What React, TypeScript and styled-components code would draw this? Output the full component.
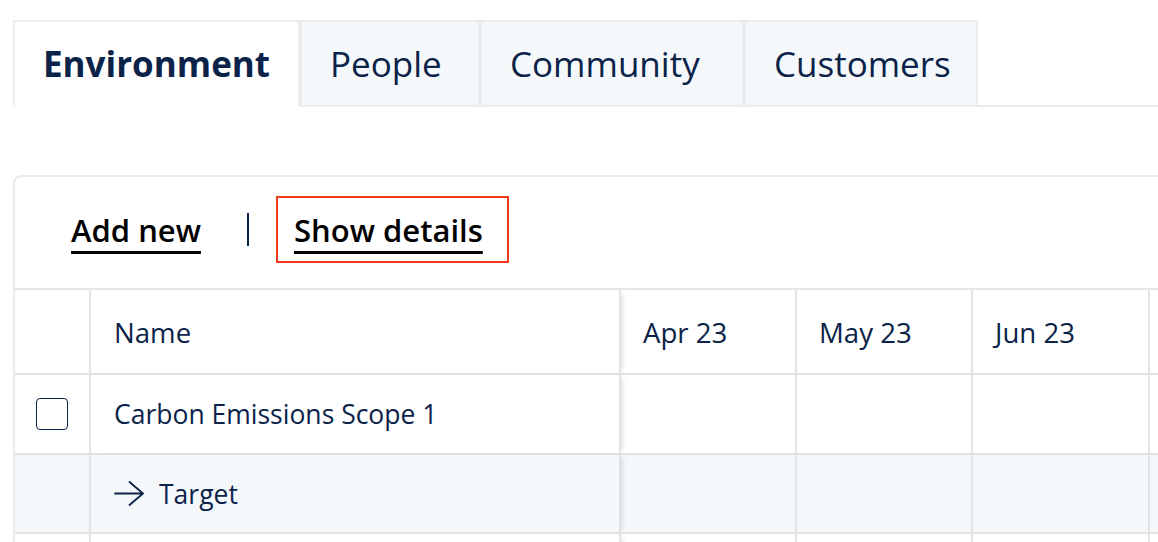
import styled, { createGlobalStyle } from 'styled-components';

const GlobalStyle = createGlobalStyle`
  html, body {
    margin: 0;
    padding: 0;
    background: #ffffff;
    overflow: hidden;
  }
  body {
    font-family: "Open Sans", "Noto Sans", sans-serif;
    color: #0b2349;
  }
  * { box-sizing: border-box; }
`;

const tabs = [
  { label: 'Environment', width: 287 },
  { label: 'People', width: 180 },
  { label: 'Community', width: 264 },
  { label: 'Customers', width: 234 },
];
const months = ['Apr 23', 'May 23', 'Jun 23', ''];

const ArrowIcon = () => (
  <svg width="30" height="25" viewBox="0 0 30 25" fill="none">
    <path d="M1 12.5H29M15.5 1L29 12.5L15.5 24" stroke="#0b2349" strokeWidth="1.8" strokeLinecap="round" strokeLinejoin="round" />
  </svg>
);

export default function App() {
  return (
    <>
      <GlobalStyle />
      <Page>
        <TabBar>
          {tabs.map((t, i) => (
            <Tab key={t.label} $active={i === 0} $width={t.width}>
              {t.label}
            </Tab>
          ))}
          <TabFiller />
        </TabBar>

        <Card>
          <Toolbar>
            <LinkButton>Add new</LinkButton>
            <Divider />
            <LinkButton $highlighted>Show details</LinkButton>
          </Toolbar>

          <Table>
            <Row $header>
              <CheckCell />
              <NameCell>Name</NameCell>
              {months.map((m, i) => (
                <MonthCell key={i}>{m}</MonthCell>
              ))}
            </Row>
            <Row $height={80}>
              <CheckCell>
                <Checkbox />
              </CheckCell>
              <NameCell>Carbon Emissions Scope 1</NameCell>
              {months.map((_, i) => (
                <MonthCell key={i} />
              ))}
            </Row>
            <Row $height={79} $shaded>
              <CheckCell />
              <NameCell>
                <ArrowIcon />
                Target
              </NameCell>
              {months.map((_, i) => (
                <MonthCell key={i} />
              ))}
            </Row>
            <Row $height={80}>
              <CheckCell />
              <NameCell />
              {months.map((_, i) => (
                <MonthCell key={i} />
              ))}
            </Row>
          </Table>
        </Card>
      </Page>
    </>
  );
}

const Page = styled.div`
  padding: 20px 0 0 13px;
  height: 542px;
  overflow: hidden;
`;

const TabBar = styled.div`
  display: flex;
  height: 87px;
`;

const Tab = styled.div<{ $active?: boolean; $width: number }>`
  display: flex;
  align-items: center;
  width: ${(p) => p.$width}px;
  padding: 0 0 0 28px;
  font-size: 35px;
  font-weight: ${(p) => (p.$active ? 700 : 400)};
  color: #0b2349;
  background: ${(p) => (p.$active ? '#ffffff' : '#f5f8fb')};
  border: 2px solid #ececec;
  border-bottom: ${(p) => (p.$active ? '2px solid #ffffff' : '2px solid #ececec')};
  white-space: nowrap;
`;

const TabFiller = styled.div`
  flex: 1;
  border-bottom: 2px solid #ececec;
`;

const Card = styled.div`
  margin-top: 68px;
  margin-right: -80px;
  border: 2px solid #ebebeb;
  border-radius: 8px 8px 0 0;
  background: #ffffff;
`;

const Toolbar = styled.div`
  display: flex;
  align-items: center;
  padding: 19px 0 25px 38px;
  border-bottom: 2px solid #e6e6e6;
`;

const LinkButton = styled.div<{ $highlighted?: boolean }>`
  display: flex;
  align-items: center;
  height: 67px;
  padding: 0 24px 0 16px;
  border: 2px solid ${(p) => (p.$highlighted ? '#f03c1e' : 'transparent')};
  font-size: 31px;
  font-weight: 600;
  color: #000000;
  text-decoration: underline;
  text-decoration-thickness: 3px;
  text-underline-offset: 9px;
`;

const Divider = styled.div`
  width: 2px;
  height: 33px;
  margin: 0 27px 0 20px;
  background: #0b2349;
`;

const Table = styled.div`
  display: flex;
  flex-direction: column;
`;

const Row = styled.div<{ $height?: number; $shaded?: boolean; $header?: boolean }>`
  display: grid;
  grid-template-columns: 76px 530px 176px 176px 177px 176px;
  height: ${(p) => p.$height ?? 85}px;
  background: ${(p) => (p.$shaded ? '#f5f8fb' : '#ffffff')};
  border-bottom: 2px solid #e3e3e3;
  font-size: ${(p) => (p.$header ? 27.6 : 26.5)}px;
`;

const Cell = styled.div`
  display: flex;
  align-items: center;
  border-right: 2px solid #e3e3e3;
  color: #0b2349;
  white-space: nowrap;
`;

const CheckCell = styled(Cell)`
  justify-content: center;
`;

const NameCell = styled(Cell)`
  position: relative;
  z-index: 1;
  gap: 15px;
  padding-left: 23px;
  box-shadow: 4px 0 5px -3px rgba(0, 0, 0, 0.14);
`;

const MonthCell = styled(Cell)`
  padding-left: 22px;
`;

const Checkbox = styled.div`
  width: 32px;
  height: 32px;
  border: 1.5px solid #0b2349;
  border-radius: 4px;
  background: #ffffff;
`;
